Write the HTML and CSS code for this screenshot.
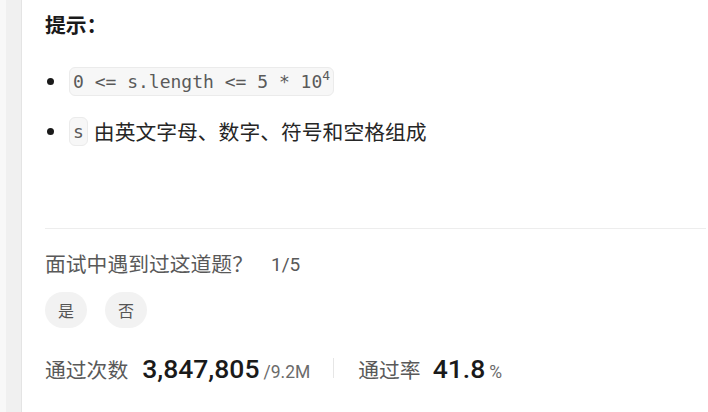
FILE: index.html
```html
<!DOCTYPE html>
<html lang="zh-CN">
  <head>
    <meta charset="UTF-8" />
    <meta name="viewport" content="width=device-width, initial-scale=1.0" />
    <title>提示</title>
    <link rel="stylesheet" href="styles.css">
  </head>
  <body>
    <div class="gutter"></div>

    <main class="panel">
      <h3 class="tips-title">提示：</h3>

      <ul class="tips">
        <li>
          <span class="dot"></span>
          <code>0 &lt;= s.length &lt;= 5 * 10<sup>4</sup></code>
        </li>
        <li>
          <span class="dot"></span>
          <code>s</code>
          <span class="tip-text">由英文字母、数字、符号和空格组成</span>
        </li>
      </ul>

      <div class="divider"></div>

      <div class="question">
        <span>面试中遇到过这道题？</span>
        <span class="count">1/5</span>
      </div>

      <div class="answers">
        <button>是</button>
        <button>否</button>
      </div>

      <div class="stats">
        <div class="stat">
          <span class="label">通过次数</span>
          <span class="value">3,847,805</span>
          <span class="unit">/9.2M</span>
        </div>
        <div class="sep"></div>
        <div class="stat">
          <span class="label">通过率</span>
          <span class="value rate">41.8</span>
          <span class="unit">%</span>
        </div>
      </div>
    </main>
  </body>
</html>
```

FILE: styles.css
```css
* {
  margin: 0;
  padding: 0;
  box-sizing: border-box;
}

body {
  display: flex;
  min-height: 412px;
  background-color: #ffffff;
  color: #262626;
  font-family: Roboto, "Noto Sans CJK SC", sans-serif;
  overflow: hidden;
}

.gutter {
  width: 22px;
  flex-shrink: 0;
  background-color: #f0f0f0;
  border-left: 6px solid #f8f8f8;
  border-right: 1px solid #e4e4e4;
}

.panel {
  flex: 1;
  padding: 11px 2px 0 23px;
}

.tips-title {
  font-size: 20.8px;
  font-weight: 700;
  line-height: 30px;
  color: #1a1a1a;
}

.tips {
  list-style: none;
  margin-top: 25px;
  display: flex;
  flex-direction: column;
  gap: 20px;
}

.tips li {
  display: flex;
  align-items: center;
  height: 30px;
  font-size: 20.8px;
  color: #262626;
}

.dot {
  width: 7px;
  height: 7px;
  border-radius: 50%;
  background-color: #1a1a1a;
  margin: 0 15px 0 2px;
}

code {
  font-family: "DejaVu Sans Mono", monospace;
  font-size: 18px;
  line-height: 27px;
  color: #5a5a5a;
  background-color: #f7f7f7;
  border: 1px solid #ebebeb;
  border-radius: 6px;
  padding: 0 3px;
}

code sup {
  font-size: 13px;
  line-height: 0;
  vertical-align: 8px;
}

.tip-text {
  margin-left: 6px;
}

.divider {
  height: 1px;
  background-color: #ededed;
  margin-top: 82px;
}

.question {
  margin-top: 21px;
  line-height: 30px;
  font-size: 20.8px;
  color: #595959;
  display: flex;
  gap: 18px;
}

.question .count {
  font-size: 19px;
}

.answers {
  margin-top: 12px;
  display: flex;
  gap: 18px;
}

.answers button {
  width: 42px;
  height: 36px;
  border: none;
  border-radius: 18px;
  background-color: #f2f2f2;
  color: #555;
  font-family: "Noto Sans CJK SC", sans-serif;
  font-size: 16px;
  cursor: pointer;
}

.stats {
  margin-top: 22px;
  height: 36px;
  display: flex;
  align-items: center;
}

.stat {
  display: flex;
  align-items: baseline;
}

.stat .label {
  font-size: 20.8px;
  color: #595959;
  margin-right: 14px;
}

.stat .value {
  font-size: 26.5px;
  font-weight: 500;
  color: #1a1a1a;
  margin-right: 4px;
}

.stat .value.rate {
  margin-left: -2px;
}

.stat .unit {
  font-size: 17.5px;
  color: #6b6b6b;
}

.sep {
  width: 1px;
  height: 20px;
  background-color: #e6e6e6;
  margin: 0 24px 0 23px;
}
```
